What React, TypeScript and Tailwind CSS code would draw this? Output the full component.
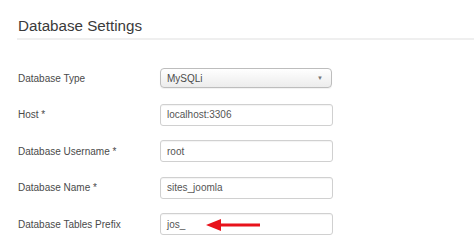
const rows = [
  { label: "Host *", value: "localhost:3306" },
  { label: "Database Username *", value: "root" },
  { label: "Database Name *", value: "sites_joomla" },
  { label: "Database Tables Prefix", value: "jos_", arrow: true },
];

function RedArrow() {
  return (
    <svg width="56" height="14" viewBox="0 0 56 14" className="absolute left-[45px] top-[4px]">
      <path d="M14 5.5 L54 5.5 L54 8.5 L14 8.5 Z" fill="#e8121b" />
      <path d="M0 7 L15 1 L15 13 Z" fill="#e8121b" />
    </svg>
  );
}

export default function App() {
  return (
    <div className="w-[474px] h-[249px] bg-white overflow-hidden font-['Liberation_Sans',Arial,sans-serif]">
      <div className="pl-[17px]">
        <h1 className="pt-[17px] pb-[3px] pl-px text-[15.2px] leading-[18px] text-[#3a3a3a] border-b-2 border-[#efefef]">
          Database Settings
        </h1>
      </div>

      <div className="pl-[18px] pt-[27px] flex flex-col gap-[14.5px]">
        <div className="flex items-center h-[22px]">
          <label className="w-[142px] text-[10px] text-[#4a4a4a]">Database Type</label>
          <div className="relative flex items-center w-[172px] h-[20px] px-[6px] rounded-[4px] border border-[#bdbdbd] bg-gradient-to-b from-white to-[#ececec] text-[10px] text-[#4a4a4a] shadow-[0_1px_1px_rgba(0,0,0,0.06)]">
            MySQLi
            <span className="absolute right-[8px] top-[5px] text-[6px] text-[#777]">▼</span>
          </div>
        </div>

        {rows.map((row) => (
          <div key={row.label} className="flex items-center h-[22px]">
            <label className="w-[142px] text-[10px] text-[#4a4a4a]">{row.label}</label>
            <div className="relative flex items-center w-[173px] h-[22px] px-[6px] rounded-[3px] border border-[#d0d0d0] bg-white text-[10px] text-[#555] shadow-[inset_0_1px_1px_rgba(0,0,0,0.05)]">
              {row.value}
              {row.arrow && <RedArrow />}
            </div>
          </div>
        ))}
      </div>
    </div>
  );
}
